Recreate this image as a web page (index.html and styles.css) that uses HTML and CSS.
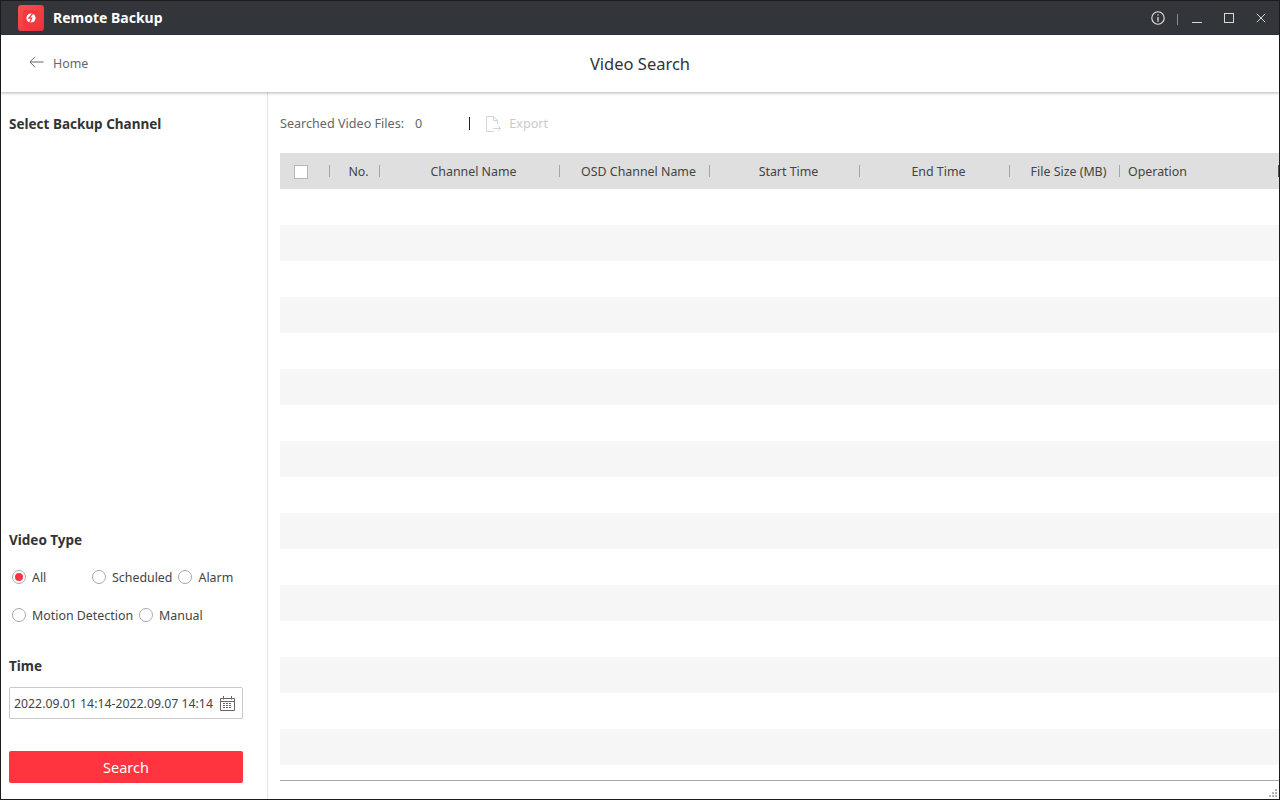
FILE: index.html
```html
<!DOCTYPE html>
<html lang="en">

<head>
    <meta charset="UTF-8">
    <title>Remote Backup</title>
    <link rel="stylesheet" href="styles.css">
</head>

<body>
    <div class="window">

        <header class="titlebar">
            <div class="app-logo">
                <svg width="26" height="26" viewBox="0 0 26 26">
                    <defs>
                        <linearGradient id="logoGrad" x1="0" y1="0" x2="1" y2="1">
                            <stop offset="0" stop-color="#f9504a" />
                            <stop offset="1" stop-color="#e8303c" />
                        </linearGradient>
                    </defs>
                    <rect width="26" height="26" rx="3" fill="url(#logoGrad)" />
                    <rect x="5" y="5" width="16" height="16" rx="3" fill="#ee3a40" />
                    <circle cx="13" cy="13" r="4.6" fill="#fff" />
                    <path d="M14.6 8.6 11 13.2h2.6l-1.8 4.2" fill="none" stroke="#ee3a40" stroke-width="1.3" />
                </svg>
            </div>
            <span class="app-name">Remote Backup</span>
            <div class="win-controls">
                <svg class="win-info" width="14" height="14" viewBox="0 0 14 14">
                    <circle cx="7" cy="7" r="6.2" fill="none" stroke="#e4e4e4" stroke-width="1.1" />
                    <path d="M7 3.2v1.4M7 6v4.8" stroke="#e4e4e4" stroke-width="1.2" />
                </svg>
                <span class="win-sep"></span>
                <svg class="win-min" width="10" height="10" viewBox="0 0 10 10">
                    <path d="M0 9.5h10" stroke="#d8d8d8" stroke-width="1" />
                </svg>
                <svg class="win-max" width="10" height="10" viewBox="0 0 10 10">
                    <rect x=".5" y=".5" width="9" height="9" fill="none" stroke="#d8d8d8" />
                </svg>
                <svg class="win-close" width="10" height="10" viewBox="0 0 10 10">
                    <path d="M.8.8l8.4 8.4M9.2.8.8 9.2" stroke="#d8d8d8" stroke-width="1" />
                </svg>
            </div>
        </header>

        <nav class="subheader">
            <a class="back-link">
                <svg width="15" height="12" viewBox="0 0 15 12">
                    <path d="M14.5 6H1M6 .8 .9 6 6 11.2" fill="none" stroke="#666" stroke-width="1" />
                </svg>
                <span>Home</span>
            </a>
            <h1>Video Search</h1>
        </nav>

        <div class="content">

            <aside class="sidebar">
                <h2 class="side-title">Select Backup Channel</h2>

                <div class="side-bottom">
                    <h2 class="side-title">Video Type</h2>
                    <div class="radio-group">
                        <label class="radio radio-all"><i class="dot checked"></i>All</label>
                        <label class="radio"><i class="dot"></i>Scheduled</label>
                        <label class="radio"><i class="dot"></i>Alarm</label>
                        <label class="radio"><i class="dot"></i>Motion Detection</label>
                        <label class="radio"><i class="dot"></i>Manual</label>
                    </div>

                    <h2 class="side-title time-title">Time</h2>
                    <div class="time-input">
                        <span>2022.09.01 14:14-2022.09.07 14:14</span>
                        <svg width="15" height="15" viewBox="0 0 15 15">
                            <path d="M.5 2.5h14v12H.5zM.5 5.5h14M3.5 0v3.5M11.5 0v3.5" fill="none" stroke="#666" />
                            <path d="M3 7.5h9M3 9.5h9M3 11.5h9" stroke="#666" stroke-dasharray="2 1" />
                        </svg>
                    </div>

                    <button class="search-btn">Search</button>
                </div>
            </aside>

            <main class="main">
                <div class="toolbar">
                    <span class="count-label">Searched Video Files:</span>
                    <span class="count-value">0</span>
                    <span class="tool-sep"></span>
                    <svg class="export-icon" width="15" height="16" viewBox="0 0 15 16">
                        <path d="M8 15.5H.5V.5h7l4 4v4M7.5.5v4h4M7 12.5h7.5M12 10l2.5 2.5L12 15" fill="none" stroke="#d4d4d4" />
                    </svg>
                    <span class="export-label">Export</span>
                </div>

                <div class="table-head">
                    <div class="th th-check"><i class="checkbox"></i></div>
                    <div class="th th-no">No.</div>
                    <div class="th th-channel">Channel Name</div>
                    <div class="th th-osd">OSD Channel Name</div>
                    <div class="th th-start">Start Time</div>
                    <div class="th th-end">End Time</div>
                    <div class="th th-size">File Size (MB)</div>
                    <div class="th th-op">Operation</div>
                </div>

                <div class="table-body">
                    <div class="row"></div>
                    <div class="row"></div>
                    <div class="row"></div>
                    <div class="row"></div>
                    <div class="row"></div>
                    <div class="row"></div>
                    <div class="row"></div>
                    <div class="row"></div>
                    <div class="row"></div>
                    <div class="row"></div>
                    <div class="row"></div>
                    <div class="row"></div>
                    <div class="row"></div>
                    <div class="row"></div>
                    <div class="row"></div>
                    <div class="row"></div>
                </div>

                <div class="status-bar">
                    <svg width="10" height="10" viewBox="0 0 10 10" fill="#b5b5b5">
                        <rect x="7" y="0" width="2" height="2" />
                        <rect x="4" y="3" width="2" height="2" />
                        <rect x="7" y="3" width="2" height="2" />
                        <rect x="1" y="6" width="2" height="2" />
                        <rect x="4" y="6" width="2" height="2" />
                        <rect x="7" y="6" width="2" height="2" />
                    </svg>
                </div>
            </main>
        </div>
    </div>
</body>

</html>
```

FILE: styles.css
```css
* {
    margin: 0;
    padding: 0;
    box-sizing: border-box;
}

html,
body {
    height: 100%;
    overflow: hidden;
}

body {
    font-family: "Noto Sans", "Open Sans", Arial, sans-serif;
    font-size: 12.4px;
    color: #444;
    background-color: #fff;
}

.window {
    width: 1280px;
    height: 800px;
    display: flex;
    flex-direction: column;
    border: 1px solid #1c1c1c;
    border-top: 0;
}

/* title bar */
.titlebar {
    height: 35px;
    flex-shrink: 0;
    background-color: #32353a;
    border-top: 1px solid #1c1c1c;
    display: flex;
    align-items: center;
    padding-left: 17px;
}

.app-logo {
    width: 26px;
    height: 26px;
    display: flex;
}

.app-name {
    margin-left: 9px;
    margin-bottom: 2px;
    font-size: 14px;
    font-weight: 700;
    color: #fff;
}

.win-controls {
    margin-left: auto;
    display: flex;
    align-items: center;
    padding-right: 13px;
}

.win-info {
    margin-bottom: 1px;
}

.win-sep {
    width: 1px;
    height: 11px;
    background-color: #8b8d90;
    margin: 2px 14px 0 12px;
}

.win-min {
    margin-right: 22px;
}

.win-max {
    margin-right: 22px;
}

/* sub header */
.subheader {
    height: 57px;
    flex-shrink: 0;
    background-color: #fff;
    box-shadow: 0 1px 3px rgba(0, 0, 0, 0.3);
    position: relative;
    z-index: 1;
    display: flex;
    align-items: center;
    justify-content: center;
}

.back-link {
    position: absolute;
    left: 28px;
    top: 20px;
    display: flex;
    align-items: center;
    color: #666;
}

.back-link svg {
    margin-bottom: 4px;
}

.back-link span {
    margin-left: 9px;
}

.subheader h1 {
    font-size: 16.5px;
    font-weight: 400;
    color: #333;
}

/* layout */
.content {
    flex: 1;
    display: flex;
    min-height: 0;
}

.sidebar {
    width: 267px;
    flex-shrink: 0;
    border-right: 1px solid #e4e4e4;
    padding: 22px 24px 16px 8px;
    display: flex;
    flex-direction: column;
    justify-content: space-between;
}

.side-title {
    font-size: 13.5px;
    font-weight: 700;
    line-height: 20px;
    color: #333;
}

.radio-group {
    display: flex;
    flex-wrap: wrap;
    margin-top: 8px;
}

.radio {
    height: 38px;
    display: flex;
    align-items: center;
    padding-left: 3px;
    margin-right: 3px;
}

.radio-all {
    width: 80px;
    margin-right: 0;
}

.dot {
    width: 14px;
    height: 14px;
    border: 1px solid #aaa;
    border-radius: 50%;
    margin-right: 6px;
    background-color: #fff;
    display: flex;
    align-items: center;
    justify-content: center;
}

.dot.checked::after {
    content: "";
    width: 8px;
    height: 8px;
    border-radius: 50%;
    background-color: #ff3440;
}

.time-title {
    margin-top: 22px;
}

.time-input {
    width: 234px;
    height: 32px;
    margin-top: 11px;
    border: 1px solid #c8c8c8;
    border-radius: 2px;
    display: flex;
    align-items: center;
    justify-content: space-between;
    padding: 0 7px 0 4px;
    font-size: 12.3px;
}

.search-btn {
    display: block;
    width: 234px;
    height: 32px;
    margin-top: 32px;
    border: 0;
    border-radius: 2px;
    background-color: #ff343e;
    color: #fff;
    font-family: inherit;
    font-size: 14.5px;
}

/* main area */
.main {
    flex: 1;
    min-width: 0;
    padding-left: 12px;
    display: flex;
    flex-direction: column;
}

.toolbar {
    height: 61px;
    padding-top: 2px;
    flex-shrink: 0;
    display: flex;
    align-items: center;
    font-size: 12.6px;
    color: #666;
}

.count-value {
    margin-left: 11px;
}

.tool-sep {
    width: 1px;
    height: 13px;
    background-color: #222;
    margin-left: 47px;
}

.export-icon {
    margin-left: 16px;
}

.export-label {
    margin-left: 8px;
    color: #c9c9c9;
}

.table-head {
    height: 36px;
    flex-shrink: 0;
    background-color: #dfdfdf;
    display: flex;
    color: #444;
}

.th {
    display: flex;
    align-items: center;
    justify-content: center;
    position: relative;
    padding-left: 7px;
}

.th::after {
    content: "";
    position: absolute;
    right: 0;
    top: 12px;
    width: 1px;
    height: 12px;
    background-color: #a5a5a5;
}

.th-check {
    width: 50px;
    justify-content: flex-start;
    padding-left: 14px;
}

.th-no {
    width: 50px;
}

.th-channel {
    width: 180px;
}

.th-osd,
.th-start,
.th-end {
    width: 150px;
}

.th-size {
    width: 110px;
}

.th-op {
    flex: 1;
    justify-content: flex-start;
    padding-left: 8px;
}

.th-op::after {
    background-color: #555;
    right: 0;
}

.checkbox {
    width: 14px;
    height: 14px;
    margin-top: 1px;
    background-color: #fff;
    border: 1px solid #b5b5b5;
}

.table-body {
    flex: 1;
    min-height: 0;
    overflow: hidden;
    border-bottom: 1px solid #a8a8a8;
}

.row {
    height: 36px;
}

.row:nth-child(even) {
    background-color: #f6f6f6;
}

.status-bar {
    height: 18px;
    flex-shrink: 0;
    display: flex;
    justify-content: flex-end;
    align-items: flex-end;
    padding-right: 1px;
}
```
